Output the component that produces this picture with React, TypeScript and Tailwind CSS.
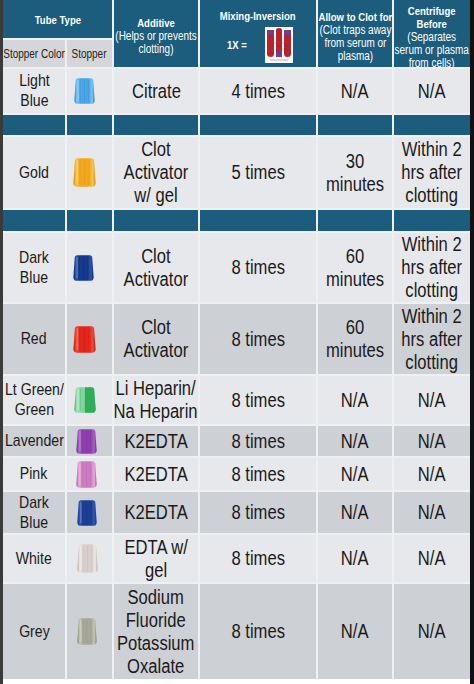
import React, { useId } from "react";

const FONT = { fontFamily: '"Liberation Sans", Arial, sans-serif' };

function N({ children, className = "", s = "scale-x-[0.83]" }: { children: React.ReactNode; className?: string; s?: string }) {
  return <span className={`inline-block whitespace-nowrap text-center ${s} ${className}`}>{children}</span>;
}

function Stopper({ base, light, dark, w = 22, h = 27, split }: { base: string; light: string; dark: string; w?: number; h?: number; split?: string }) {
  const id = useId().replace(/:/g, "");
  return (
    <svg width={w} height={h} viewBox="0 0 22 27" preserveAspectRatio="none">
      <defs>
        <linearGradient id={`g${id}`} x1="0" y1="0" x2="1" y2="0">
          <stop offset="0" stopColor={dark} />
          <stop offset="0.12" stopColor={light} />
          <stop offset="0.3" stopColor={base} />
          <stop offset="0.7" stopColor={base} />
          <stop offset="0.88" stopColor={light} />
          <stop offset="1" stopColor={dark} />
        </linearGradient>
      </defs>
      <path d="M1.8 3 Q1.8 0.3 4.5 0.3 H17.5 Q20.2 0.3 20.2 3 L21.6 23 Q21.6 26.8 18 26.8 H4 Q0.4 26.8 0.4 23 Z" fill={`url(#g${id})`} />
      {split && <path d="M11 0.3 H17.5 Q20.2 0.3 20.2 3 L21.6 23 Q21.6 26.8 18 26.8 H11 Z" fill={split} />}
      <g stroke={dark} strokeOpacity="0.35" strokeWidth="0.8">
        <line x1="6.5" y1="2" x2="6.3" y2="25" />
        <line x1="11" y1="2" x2="11" y2="25" />
        <line x1="15.5" y1="2" x2="15.7" y2="25" />
      </g>
      <rect x="3.5" y="2" width="1.5" height="22" fill="#ffffff" opacity="0.25" />
    </svg>
  );
}

function InversionIcon() {
  return (
    <svg width="28" height="36" viewBox="0 0 28 36">
      <rect x="0" y="0" width="28" height="36" fill="#ffffff" />
      <rect x="2" y="3" width="7" height="5" fill="#7a3a8c" />
      <path d="M2 8 H9 V27 Q9 30 5.5 30 Q2 30 2 27 Z" fill="#b8232c" />
      <path d="M11 3 Q11 1 14 1 Q17 1 17 3 V24 H11 Z" fill="#b8232c" />
      <rect x="11" y="24" width="6" height="6" fill="#7a3a8c" />
      <rect x="19" y="3" width="7" height="5" fill="#7a3a8c" />
      <path d="M19 8 H26 V27 Q26 30 22.5 30 Q19 30 19 27 Z" fill="#b8232c" />
      <line x1="9.5" y1="16" x2="10.5" y2="16" stroke="#555" strokeWidth="0.6" />
      <line x1="17.5" y1="16" x2="18.5" y2="16" stroke="#555" strokeWidth="0.6" />
      <rect x="5" y="32.5" width="18" height="1" fill="#b0b0b0" />
    </svg>
  );
}

type Row = {
  color: React.ReactNode;
  stopper: React.ReactNode;
  shift: string;
  additive: React.ReactNode;
  mix: string;
  clot: React.ReactNode;
  centri: React.ReactNode;
  dark?: boolean;
};

const within = (
  <>
    Within 2<br />hrs after<br />clotting
  </>
);

const rowsA: Row[] = [
  {
    color: <>Light<br />Blue</>,
    stopper: <Stopper base="#4aa6e6" light="#7cc4f2" dark="#2a7cc0" w={21} h={26} />,
    shift: "pr-[11px]",
    additive: "Citrate",
    mix: "4 times",
    clot: "N/A",
    centri: "N/A",
  },
];
const rowsB: Row[] = [
  {
    color: "Gold",
    stopper: <Stopper base="#f2a81e" light="#f8c450" dark="#d08a10" w={23} h={29} />,
    shift: "pr-[10px]",
    additive: <>Clot<br />Activator<br />w/ gel</>,
    mix: "5 times",
    clot: <>30<br />minutes</>,
    centri: within,
  },
];
const rowsC: Row[] = [
  {
    color: <>Dark<br />Blue</>,
    stopper: <Stopper base="#173a8c" light="#2c55b0" dark="#0c2260" w={21} h={26} />,
    shift: "pr-[13px]",
    additive: <>Clot<br />Activator</>,
    mix: "8 times",
    clot: <>60<br />minutes</>,
    centri: within,
  },
  {
    color: "Red",
    stopper: <Stopper base="#e2261a" light="#f04a38" dark="#b01810" w={23} h={27} />,
    shift: "pr-[10px]",
    additive: <>Clot<br />Activator</>,
    mix: "8 times",
    clot: <>60<br />minutes</>,
    centri: within,
    dark: true,
  },
  {
    color: <>Lt Green/<br />Green</>,
    stopper: <Stopper base="#7fd59a" light="#a6e6b8" dark="#3aa862" split="#2fae5a" w={22} h={26} />,
    shift: "pr-[10px]",
    additive: <>Li Heparin/<br />Na Heparin</>,
    mix: "8 times",
    clot: "N/A",
    centri: "N/A",
  },
  {
    color: "Lavender",
    stopper: <Stopper base="#8e3fae" light="#a860c4" dark="#6a2a88" w={21} h={25} />,
    shift: "pr-[6px]",
    additive: "K2EDTA",
    mix: "8 times",
    clot: "N/A",
    centri: "N/A",
    dark: true,
  },
  {
    color: "Pink",
    stopper: <Stopper base="#cc7cc0" light="#e8a8dc" dark="#a8589c" w={21} h={27} />,
    shift: "pr-[6px]",
    additive: "K2EDTA",
    mix: "8 times",
    clot: "N/A",
    centri: "N/A",
  },
  {
    color: <>Dark<br />Blue</>,
    stopper: <Stopper base="#1c3f94" light="#3358b4" dark="#102a6c" w={20} h={26} />,
    shift: "pr-[5px]",
    additive: "K2EDTA",
    mix: "8 times",
    clot: "N/A",
    centri: "N/A",
    dark: true,
  },
  {
    color: "White",
    stopper: <Stopper base="#d8cfcc" light="#eee8e6" dark="#b8aca8" w={21} h={29} />,
    shift: "pr-[4px]",
    additive: <>EDTA w/<br />gel</>,
    mix: "8 times",
    clot: "N/A",
    centri: "N/A",
  },
  {
    color: "Grey",
    stopper: <Stopper base="#a8a898" light="#c4c4b6" dark="#858574" w={20} h={27} />,
    shift: "pr-[5px]",
    additive: <>Sodium<br />Fluoride<br />Potassium<br />Oxalate</>,
    mix: "8 times",
    clot: "N/A",
    centri: "N/A",
    dark: true,
  },
];

function DataRow({ r }: { r: Row }) {
  const bg = r.dark ? "bg-[#cdd0d5]" : "bg-[#e6e8eb]";
  const cell = `${bg} flex items-center justify-center text-center text-[#1a1a1a]`;
  const big = "text-[20px] leading-[23px]";
  return (
    <>
      <div className={`${cell} text-[17px] leading-[20px]`}><N>{r.color}</N></div>
      <div className={`${cell} ${r.shift}`}>{r.stopper}</div>
      <div className={`${cell} ${big}`}><N>{r.additive}</N></div>
      <div className={`${cell} ${big}`}><N>{r.mix}</N></div>
      <div className={`${cell} ${big}`}><N>{r.clot}</N></div>
      <div className={`${cell} ${big}`}><N>{r.centri}</N></div>
    </>
  );
}

function SepRow() {
  return (
    <>
      <div className="bg-[#1c5c7d]" />
      <div className="bg-[#1c5c7d]" />
      <div className="bg-[#1c5c7d]" />
      <div className="bg-[#1c5c7d]" />
      <div className="bg-[#1c5c7d]" />
      <div className="bg-[#1c5c7d]" />
    </>
  );
}

export default function App() {
  const head = "bg-[#1c5c7d] text-white flex flex-col items-center justify-center text-center text-[12px] leading-[13px]";
  return (
    <div className="flex w-[474px] h-[684px] bg-white overflow-hidden" style={FONT}>
      <div className="w-[3px] bg-[#3a3a3a]" />
      <div className="flex flex-col w-[467px]">
        <div className="grid grid-cols-[62px_45px_84px_116px_74px_76px] grid-rows-[38px_27px_44px_20px_71px_21px_69px_70px_48px_30px_32px_41px_47px_95px] gap-[2px] bg-[#eef0f2]">
          <div className={`${head} col-span-2 pt-[3px]`}>
            <N className="font-bold text-[11.5px]">Tube Type</N>
          </div>
          <div className={`${head} row-span-2 pt-[6px]`}>
            <N>
              <b className="text-[11.5px]">Additive</b>
              <br />(Helps or prevents
              <br />clotting)
            </N>
          </div>
          <div className={`${head} row-span-2 justify-start pt-[10px]`}>
            <N className="font-bold text-[11.5px]">Mixing-Inversion</N>
            <div className="flex items-center gap-[16px] mt-[4px] pl-[2px]">
              <N className="font-bold text-[11.5px] mt-[1px]">1X =</N>
              <InversionIcon />
            </div>
          </div>
          <div className={`${head} row-span-2 pt-[6px]`}>
            <N>
              <b className="text-[11.5px]">Allow to Clot for</b>
              <br />(Clot traps away
              <br />from serum or
              <br />plasma)
            </N>
          </div>
          <div className={`${head} row-span-2 justify-start pt-[5px]`}>
            <N>
              <b className="text-[11.5px]">Centrifuge</b>
              <br />
              <b className="text-[11.5px]">Before</b>
              <br />(Separates
              <br />serum or plasma
              <br />from cells)
            </N>
          </div>
          <div className="bg-[#d4d6da] text-[#222] text-[12px] flex items-center justify-center">
            <N>Stopper Color</N>
          </div>
          <div className="bg-[#d4d6da] text-[#222] text-[12px] flex items-center justify-center">
            <N>Stopper</N>
          </div>
          {rowsA.map((r, i) => <DataRow key={"a" + i} r={r} />)}
          <SepRow />
          {rowsB.map((r, i) => <DataRow key={"b" + i} r={r} />)}
          <SepRow />
          {rowsC.map((r, i) => <DataRow key={"c" + i} r={r} />)}
        </div>
      </div>
      <div className="w-[4px] bg-[#111111]" />
    </div>
  );
}
